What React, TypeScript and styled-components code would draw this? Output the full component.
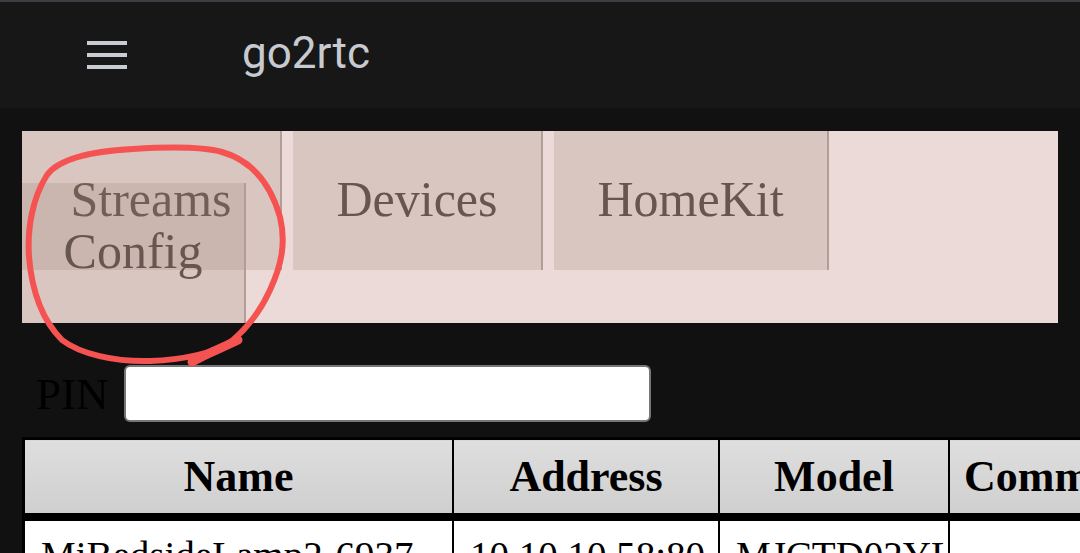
import React from 'react';
import styled, { createGlobalStyle } from 'styled-components';

const Global = createGlobalStyle`
  html, body {
    margin: 0;
    padding: 0;
    background: #111111;
    overflow: hidden;
  }
  body {
    font-family: "Liberation Serif", serif;
  }
`;

const Page = styled.div`
  position: relative;
  width: 1080px;
  height: 553px;
  overflow: hidden;
  border-top: 2px solid #3b3e42;
  box-sizing: border-box;
`;

const TopBar = styled.header`
  height: 106px;
  background: #171717;
  display: flex;
  align-items: center;
  padding-left: 87px;
  gap: 115px;
`;

const MenuButton = styled.div`
  width: 40px;
  display: flex;
  flex-direction: column;
  gap: 8px;
  span {
    display: block;
    height: 4px;
    background: #c9ccd1;
  }
`;

const Title = styled.div`
  font-family: Roboto, "Liberation Sans", sans-serif;
  font-size: 44px;
  color: #c7cad0;
  margin-top: -4px;
`;

const Main = styled.main`
  padding: 23px 22px 0;
`;

const TabBox = styled.div`
  background: #ebdad7;
  height: 192px;
  display: grid;
  grid-template-columns: 260px 250px 275px;
  grid-template-rows: 52px 87px 53px;
  column-gap: 11px;
`;

const Tab = styled.div<{ $row: string; $col: number; $width?: number }>`
  grid-row: ${(p) => p.$row};
  grid-column: ${(p) => p.$col};
  width: ${(p) => (p.$width ? `${p.$width}px` : 'auto')};
  background: rgba(153, 127, 115, 0.22);
  border-right: 2px solid #b39d97;
  display: flex;
  align-items: center;
  justify-content: center;
  font-size: 50px;
  color: #66564f;
  line-height: 1;
  padding-bottom: 4px;
  box-sizing: border-box;
`;

const PinRow = styled.div`
  display: flex;
  align-items: center;
  margin-top: 42px;
  height: 57px;
`;

const PinLabel = styled.label`
  font-size: 45px;
  color: #000;
  padding-left: 14px;
  width: 88px;
  box-sizing: border-box;
  margin-top: 0;
`;

const PinInput = styled.input`
  width: 527px;
  height: 57px;
  box-sizing: border-box;
  border: 2px solid #767676;
  border-radius: 6px;
  background: #fff;
  margin-left: 14px;
`;

const Table = styled.table`
  margin-top: 15px;
  border-collapse: collapse;
  border: 3px solid #000;
  table-layout: fixed;
  width: 1240px;
  background: #fff;
`;

const Th = styled.th<{ $w: number }>`
  width: ${(p) => p.$w}px;
  height: 73px;
  padding: 0;
  font-size: 44px;
  font-weight: bold;
  color: #000;
  background: linear-gradient(#dedede, #cfcfcf);
  border-left: 2px solid #000;
  border-bottom: 8px solid #000;
  text-align: center;
  white-space: nowrap;
  overflow: hidden;
`;

const Td = styled.td`
  font-size: 39px;
  color: #000;
  padding: 12px 16px;
  border-left: 2px solid #000;
  white-space: nowrap;
  overflow: hidden;
  height: 80px;
  vertical-align: top;
`;

const Scribble = styled.svg`
  position: absolute;
  left: 0;
  top: 0;
  pointer-events: none;
`;

export default function App() {
  return (
    <>
      <Global />
      <Page>
        <TopBar>
          <MenuButton>
            <span />
            <span />
            <span />
          </MenuButton>
          <Title>go2rtc</Title>
        </TopBar>
        <Main>
          <TabBox>
            <Tab $row="1 / 3" $col={1}>Streams</Tab>
            <Tab $row="2 / 4" $col={1} $width={224}>Config</Tab>
            <Tab $row="1 / 3" $col={2}>Devices</Tab>
            <Tab $row="1 / 3" $col={3}>HomeKit</Tab>
          </TabBox>
          <PinRow>
            <PinLabel>PIN</PinLabel>
            <PinInput type="text" />
          </PinRow>
          <Table>
            <thead>
              <tr>
                <Th $w={427}>Name</Th>
                <Th $w={264}>Address</Th>
                <Th $w={228}>Model</Th>
                <Th $w={321} style={{ textAlign: 'left', paddingLeft: 14 }}>Commands</Th>
              </tr>
            </thead>
            <tbody>
              <tr>
                <Td>MiBedsideLamp2-6937</Td>
                <Td>10.10.10.58:80</Td>
                <Td>MJCTD02YL</Td>
                <Td></Td>
              </tr>
            </tbody>
          </Table>
        </Main>
        <Scribble width="1080" height="553" viewBox="0 0 1080 553">
          <path
            d="M47 173 C60 155 95 149 133 147 C165 145 200 144 222 150 C250 158 270 180 280 215 C286 240 282 262 270 288 C260 310 248 325 233 338 C215 352 180 358 150 359 C115 360 80 352 62 338 C42 318 32 290 29 255 C27 225 33 195 47 173 Z"
            fill="none"
            stroke="#f45352"
            strokeWidth="6"
            strokeLinecap="round"
            strokeLinejoin="round"
          />
          <path
            d="M192 360 C205 352 222 346 238 338"
            fill="none"
            stroke="#f45352"
            strokeWidth="9"
            strokeLinecap="round"
          />
        </Scribble>
      </Page>
    </>
  );
}
